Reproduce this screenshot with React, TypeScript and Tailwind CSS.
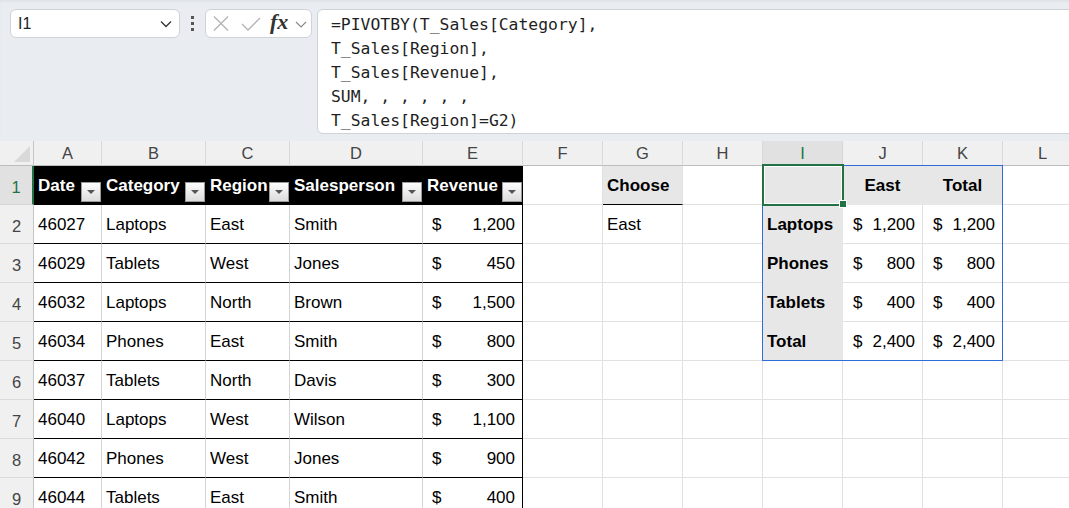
import React from 'react';

const table = [
  ['46027', 'Laptops', 'East', 'Smith', '1,200'],
  ['46029', 'Tablets', 'West', 'Jones', '450'],
  ['46032', 'Laptops', 'North', 'Brown', '1,500'],
  ['46034', 'Phones', 'East', 'Smith', '800'],
  ['46037', 'Tablets', 'North', 'Davis', '300'],
  ['46040', 'Laptops', 'West', 'Wilson', '1,100'],
  ['46042', 'Phones', 'West', 'Jones', '900'],
  ['46044', 'Tablets', 'East', 'Smith', '400'],
];

const headers = ['Date', 'Category', 'Region', 'Salesperson', 'Revenue'];
const pivot: [string, string, string][] = [
  ['Laptops', '1,200', '1,200'],
  ['Phones', '800', '800'],
  ['Tablets', '400', '400'],
  ['Total', '2,400', '2,400'],
];
const letters = ['A', 'B', 'C', 'D', 'E', 'F', 'G', 'H', 'I', 'J', 'K', 'L'];

function FilterBtn() {
  return (
    <div className="w-[20px] h-[20px] self-end mb-[2px] shrink-0 border border-[#9a9a9a] bg-linear-to-b from-[#fdfdfd] to-[#dcdcdc] flex items-center justify-center">
      <svg width="8" height="4" viewBox="0 0 8 4">
        <path d="M0 0 L8 0 L4 4 Z" fill="#555" />
      </svg>
    </div>
  );
}

function TopBar() {
  return (
    <div className="h-[141px] bg-[#e9ecf0] flex items-start pt-[9px] pl-[10px] overflow-hidden shadow-[inset_0_2px_2px_rgba(0,0,0,0.04)]">
      <div className="w-[170px] h-[29px] shrink-0 bg-white border border-[#cfd2d6] rounded-[6px] flex items-center justify-between pl-[7px] pr-[7px]">
        <span className="text-[16px] text-[#222]">I1</span>
        <svg width="12" height="8" viewBox="0 0 12 8">
          <path d="M1 1.5 L6 6.5 L11 1.5" fill="none" stroke="#333" strokeWidth="1.3" />
        </svg>
      </div>
      <div className="w-[25px] h-[29px] shrink-0 flex flex-col items-center justify-center gap-[3px]">
        <div className="w-[3px] h-[3px] bg-[#555]" />
        <div className="w-[3px] h-[3px] bg-[#555]" />
        <div className="w-[3px] h-[3px] bg-[#555]" />
      </div>
      <div className="w-[107px] h-[29px] shrink-0 bg-white border border-[#cfd2d6] rounded-[6px] flex items-center pl-[7px]">
        <svg width="16" height="15" viewBox="0 0 16 15" className="shrink-0">
          <path d="M1 0.5 L15 14.5 M15 0.5 L1 14.5" stroke="#b3b3b3" strokeWidth="1.3" fill="none" />
        </svg>
        <svg width="20" height="14" viewBox="0 0 20 14" className="shrink-0 ml-[12px]">
          <path d="M1 7 L7 13 L19 1" stroke="#b3b3b3" strokeWidth="1.3" fill="none" />
        </svg>
        <span className="ml-[9px] w-[21px] text-[22px] leading-none italic font-semibold font-['Liberation_Serif',serif] text-[#333] -mt-[3px]">fx</span>
        <svg width="12" height="7" viewBox="0 0 12 7" className="shrink-0 ml-[4px] mt-[1px]">
          <path d="M1 1 L6 6 L11 1" fill="none" stroke="#888" strokeWidth="1.1" />
        </svg>
      </div>
      <div className="ml-[5px] w-[800px] h-[125px] shrink-0 bg-white border border-[#cfd2d6] rounded-[6px] pl-[13px] pt-[3px] font-['DejaVu_Sans_Mono',monospace] text-[16.4px] leading-[24px] text-[#1f1f1f] whitespace-pre">
        <div>=PIVOTBY(T_Sales[Category],</div>
        <div>T_Sales[Region],</div>
        <div>T_Sales[Revenue],</div>
        <div>SUM, , , , , ,</div>
        <div>T_Sales[Region]=G2)</div>
      </div>
    </div>
  );
}

function RowHeader({ n }: { n: number }) {
  if (n === 1) {
    return (
      <div className="h-[39px] bg-[#e1e1e1] border-r-2 border-b border-r-[#217346] border-b-[#d6d6d6] flex items-end justify-center pb-[4px] text-[16.5px] text-[#217346]">
        1
      </div>
    );
  }
  return (
    <div className="h-[39px] bg-[#f0f0f0] border-r border-b border-r-[#c6c6c6] border-b-[#dadada] flex items-end justify-center pb-[4px] text-[16.5px] text-[#444]">
      {n}
    </div>
  );
}

const plain = 'h-[39px] border-r border-b border-[#e1e1e1]';

function Row({ r }: { r: number }) {
  const cells: React.ReactNode[] = [];
  cells.push(<RowHeader key="h" n={r} />);
  if (r === 1) {
    headers.forEach((h, i) => {
      cells.push(
        <div key={'t' + i} className="h-[39px] bg-black border-r border-b border-black flex justify-between pl-[4px] text-white font-bold text-[17px]">
          <span className="self-center pt-[2px]">{h}</span>
          <FilterBtn />
        </div>
      );
    });
  } else {
    const d = table[r - 2];
    for (let i = 0; i < 4; i++) {
      cells.push(
        <div key={'t' + i} className="h-[39px] border-r border-b border-r-[#d4d4d4] border-b-black flex items-center pl-[4px] pt-[2px] text-[17px] text-black">
          {d[i]}
        </div>
      );
    }
    cells.push(
      <div key="t4" className="h-[39px] border-r border-b border-black flex items-center justify-between pl-[9px] pr-[7px] pt-[2px] text-[17px] text-black">
        <span>$</span>
        <span>{d[4]}</span>
      </div>
    );
  }
  cells.push(<div key="F" className={plain} />);
  if (r === 1) {
    cells.push(
      <div key="G" className="h-[39px] bg-[#e7e7e7] border-r border-b border-r-[#e1e1e1] border-b-black flex items-center pl-[4px] pt-[2px] text-[17px] font-bold text-black">
        Choose
      </div>
    );
  } else if (r === 2) {
    cells.push(
      <div key="G" className={plain + ' flex items-center pl-[4px] pt-[2px] text-[17px] text-black'}>
        East
      </div>
    );
  } else {
    cells.push(<div key="G" className={plain} />);
  }
  cells.push(<div key="H" className={plain} />);
  if (r === 1) {
    cells.push(<div key="I" className="h-[39px] bg-[#e7e7e7] border-r border-b border-[#e7e7e7]" />);
    cells.push(
      <div key="J" className="h-[39px] bg-[#e7e7e7] border-r border-b border-[#e7e7e7] flex items-center justify-center pt-[2px] text-[17px] font-bold text-black">
        East
      </div>
    );
    cells.push(
      <div key="K" className="h-[39px] bg-[#e7e7e7] border-r border-b border-[#e7e7e7] flex items-center justify-center pt-[2px] text-[17px] font-bold text-black">
        Total
      </div>
    );
  } else if (r <= 5) {
    const p = pivot[r - 2];
    cells.push(
      <div key="I" className="h-[39px] bg-[#e7e7e7] border-r border-b border-[#e7e7e7] flex items-center pl-[4px] pt-[2px] text-[17px] font-bold text-black">
        {p[0]}
      </div>
    );
    cells.push(
      <div key="J" className={plain + ' flex items-center justify-between pl-[10px] pr-[7px] pt-[2px] text-[17px] text-black'}>
        <span>$</span>
        <span>{p[1]}</span>
      </div>
    );
    cells.push(
      <div key="K" className={plain + ' flex items-center justify-between pl-[10px] pr-[7px] pt-[2px] text-[17px] text-black'}>
        <span>$</span>
        <span>{p[2]}</span>
      </div>
    );
  } else {
    cells.push(<div key="I" className={plain} />);
    cells.push(<div key="J" className={plain} />);
    cells.push(<div key="K" className={plain} />);
  }
  cells.push(<div key="L" className={plain} />);
  return <>{cells}</>;
}

function Sheet() {
  return (
    <div className="relative">
      <div className="grid grid-cols-[34px_68px_104px_84px_133px_100px_80px_80px_80px_80px_80px_80px_80px]">
        <div className="h-[25px] bg-[#f0f0f0] border-r border-b border-r-[#c6c6c6] border-b-[#bdbdbd] relative">
          <svg width="16" height="16" viewBox="0 0 16 16" className="absolute right-[3px] bottom-[3px]">
            <path d="M16 0 L16 16 L0 16 Z" fill="#d9d9d9" />
          </svg>
        </div>
        {letters.map((l) =>
          l === 'I' ? (
            <div key={l} className="h-[25px] bg-[#e1e1e1] border-r border-b border-r-[#d6d6d6] border-b-[#bdbdbd] flex items-center justify-center text-[16.5px] text-[#217346]">
              {l}
            </div>
          ) : (
            <div key={l} className="h-[25px] bg-[#f0f0f0] border-r border-b border-r-[#d9d9d9] border-b-[#bdbdbd] flex items-center justify-center text-[16.5px] text-[#444]">
              {l}
            </div>
          )
        )}
        {[1, 2, 3, 4, 5, 6, 7, 8, 9].map((r) => (
          <Row key={r} r={r} />
        ))}
      </div>
      <div className="absolute left-[762px] top-[24px] w-[241px] h-[196px] border border-[#2f6bd6] pointer-events-none" />
      <div className="absolute left-[762px] top-[23px] w-[82px] h-[42px] border-2 border-[#217346] shadow-[inset_0_0_0_1px_white] pointer-events-none" />
      <div className="absolute left-[839px] top-[59px] w-[8px] h-[8px] bg-[#217346] border border-white pointer-events-none" />
    </div>
  );
}

export default function App() {
  return (
    <div className="w-[1069px] h-[508px] overflow-hidden bg-white font-['Liberation_Sans',Arial,sans-serif]">
      <TopBar />
      <Sheet />
    </div>
  );
}
